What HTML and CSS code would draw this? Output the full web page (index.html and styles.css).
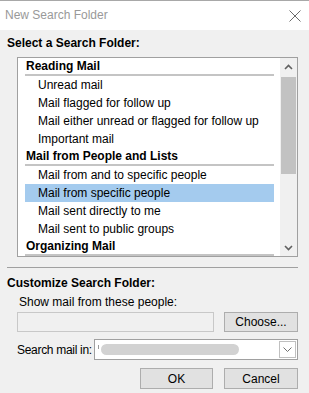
FILE: index.html
```html
<!DOCTYPE html>
<html lang="en">
<head>
    <meta charset="UTF-8">
    <meta name="viewport" content="width=device-width, initial-scale=1.0">
    <title>New Search Folder</title>
    <link rel="stylesheet" href="styles.css">
</head>
<body>
    <div class="titlebar">
        <span class="title">New Search Folder</span>
        <svg class="close" width="12" height="12" viewBox="0 0 12 12">
            <path d="M0.5 0.5 L11.5 11.5 M11.5 0.5 L0.5 11.5" stroke="#6b6b6b" stroke-width="1" fill="none"/>
        </svg>
    </div>

    <div class="dialog">
        <div class="group-label">Select a Search Folder:</div>

        <div class="listbox">
            <div class="list">
                <div class="header">Reading Mail</div>
                <div class="item">Unread mail</div>
                <div class="item">Mail flagged for follow up</div>
                <div class="item">Mail either unread or flagged for follow up</div>
                <div class="item">Important mail</div>
                <div class="header">Mail from People and Lists</div>
                <div class="item">Mail from and to specific people</div>
                <div class="item selected">Mail from specific people</div>
                <div class="item">Mail sent directly to me</div>
                <div class="item">Mail sent to public groups</div>
                <div class="header">Organizing Mail</div>
            </div>
            <div class="scrollbar">
                <div class="arrow">
                    <svg width="9" height="6" viewBox="0 0 9 6"><path d="M1 5 L4.5 1.5 L8 5" stroke="#606060" stroke-width="1.6" fill="none"/></svg>
                </div>
                <div class="thumb"></div>
                <div class="track"></div>
                <div class="arrow">
                    <svg width="9" height="6" viewBox="0 0 9 6"><path d="M1 1 L4.5 4.5 L8 1" stroke="#606060" stroke-width="1.6" fill="none"/></svg>
                </div>
            </div>
        </div>

        <div class="separator"></div>

        <div class="group-label customize">Customize Search Folder:</div>
        <div class="field-label">Show mail from these people:</div>
        <div class="row">
            <div class="textbox"></div>
            <button class="btn">Choose...</button>
        </div>

        <div class="row search-row">
            <span class="search-label">Search mail in:</span>
            <div class="combo">
                <span class="tick"></span>
                <span class="blurred"></span>
                <span class="combo-button">
                    <svg width="9" height="5" viewBox="0 0 9 5"><path d="M0.5 0.5 L4.5 4.5 L8.5 0.5" stroke="#707070" stroke-width="1" fill="none"/></svg>
                </span>
            </div>
        </div>

        <div class="buttons">
            <button class="btn ok">OK</button>
            <button class="btn">Cancel</button>
        </div>
    </div>
</body>
</html>
```

FILE: styles.css
```css
body {
    margin: 0;
    background-color: #f0f0f0;
    font-family: "Liberation Sans", Arial, sans-serif;
    font-size: 12px;
    color: #000;
    width: 309px;
    height: 393px;
    overflow: hidden;
    white-space: nowrap;
}
.titlebar {
    background: #fff;
    border-top: 1px solid #a8a8a8;
    height: 29px;
    display: flex;
    align-items: center;
    justify-content: space-between;
    padding: 0 8px 0 5px;
}
.title {
    color: #999;
    font-size: 12px;
    line-height: 16px;
    margin-top: -1px;
}
.close {
    display: block;
}
.dialog {
    padding: 5px 11px 0 7px;
}
.group-label {
    font-weight: bold;
    line-height: 16px;
}
.listbox {
    margin: 6px 0 0 10px;
    height: 198px;
    border: 1px solid #a0a0a0;
    background: #fff;
    display: flex;
    overflow: hidden;
}
.list {
    flex: 1;
    padding: 0 6px 0 7px;
    overflow: hidden;
}
.header {
    font-weight: bold;
    line-height: 16px;
    height: 16px;
    padding-left: 1px;
    border-bottom: 2px solid #c4c4c4;
}
.item {
    line-height: 18px;
    height: 18px;
    padding-left: 13px;
}
.item.selected {
    background-color: #a4cbee;
}
.scrollbar {
    width: 17px;
    background: #f0f0f0;
    display: flex;
    flex-direction: column;
}
.arrow {
    height: 17px;
    display: flex;
    align-items: center;
    justify-content: center;
}
.thumb {
    height: 97px;
    margin: 2px 1px 0 1px;
    background: #c2c2c2;
}
.track {
    flex: 1;
}
.separator {
    margin-top: 10px;
    height: 1px;
    background: #a0a0a0;
}
.customize {
    margin-top: 7px;
}
.field-label {
    margin: 3px 0 0 12px;
    line-height: 16px;
}
.row {
    display: flex;
    align-items: center;
    margin-left: 10px;
}
.row:not(.search-row) {
    margin-top: 2px;
    gap: 10px;
}
.textbox {
    width: 195px;
    height: 18px;
    border: 1px solid #c8c8c8;
    background: #f0f0f0;
}
.btn {
    font-family: inherit;
    font-size: 12px;
    color: #000;
    background: #e1e1e1;
    border: 1px solid #adadad;
    width: 74px;
    height: 20px;
    padding: 0;
    line-height: 16px;
}
.search-row {
    margin-top: 7px;
    gap: 0;
}
.search-label {
    flex-shrink: 0;
    width: 77px;
    line-height: 16px;
    letter-spacing: -0.3px;
}
.combo {
    flex: 1;
    height: 19px;
    border: 1px solid #a0a0a0;
    background: #fff;
    display: flex;
    align-items: center;
    padding: 0 1px 0 3px;
}
.tick {
    width: 1px;
    height: 4px;
    background: #999;
    margin-top: -5px;
}
.blurred {
    width: 138px;
    height: 11px;
    margin-left: 2px;
    border-radius: 6px;
    background: #d2d2d2;
    filter: blur(0.6px);
}
.combo-button {
    margin-left: auto;
    width: 15px;
    height: 15px;
    border: 1px solid #c0c0c0;
    display: flex;
    align-items: center;
    justify-content: center;
}
.buttons {
    display: flex;
    justify-content: flex-end;
    gap: 11px;
    margin-top: 8px;
}
.buttons .btn {
    height: 21px;
}
.buttons .ok {
    width: 73px;
}
```
